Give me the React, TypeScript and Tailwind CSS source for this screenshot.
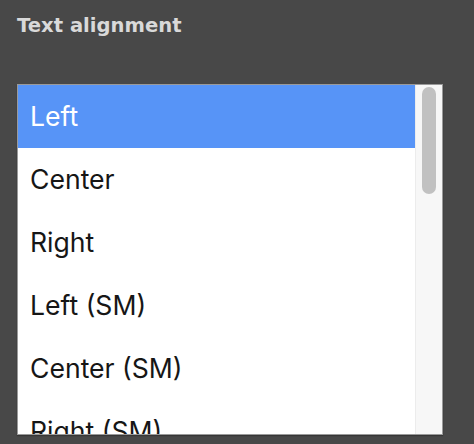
const options = ["Left", "Center", "Right", "Left (SM)", "Center (SM)", "Right (SM)", "Left (MD)", "Center (MD)", "Right (MD)"];

export default function App() {
  const selected = 0;

  return (
    <div className="h-[444px] w-[474px] overflow-hidden bg-[#484848] pl-[17px] pt-[14px]">
      <h2 className="font-['DejaVu_Sans',sans-serif] text-[19.6px] font-bold leading-[24px] text-[#d9d9d9]">
        Text alignment
      </h2>

      <div className="mt-[46px] flex h-[351px] w-[426px] overflow-hidden border border-[#9a9a9a] bg-white shadow-[0_1px_1px_rgba(0,0,0,0.25)]">
        <ul className="min-w-0 flex-1">
          {options.map((option, index) => (
            <li
              key={option}
              className={`h-[63px] pl-[12px] font-['Inter',sans-serif] text-[26.6px] leading-[63px] ${
                index === selected ? "bg-[#5794f7] text-white" : "text-[#161616]"
              }`}
            >
              {option}
            </li>
          ))}
        </ul>
        <div className="flex w-[27px] shrink-0 justify-center border-l border-[#ececec] bg-[#f7f7f7] pt-[2px]">
          <div className="h-[107px] w-[14px] rounded-full bg-[#c1c1c1]" />
        </div>
      </div>
    </div>
  );
}
